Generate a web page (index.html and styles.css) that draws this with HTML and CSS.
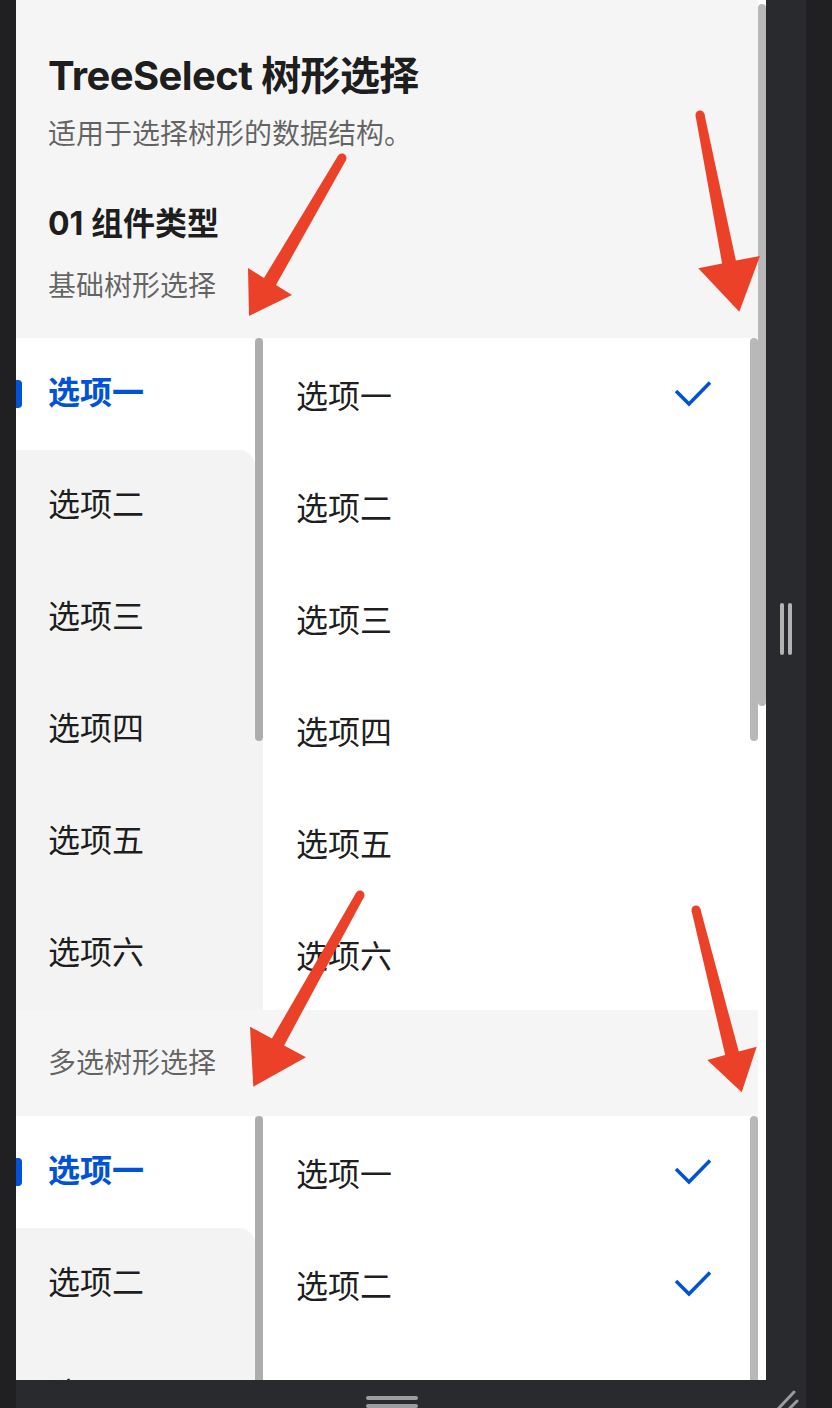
FILE: index.html
```html
<!DOCTYPE html>
<html lang="zh-CN">
<head>
    <meta charset="UTF-8">
    <meta name="viewport" content="width=device-width, initial-scale=1.0">
    <title>TreeSelect 树形选择</title>
    <link rel="stylesheet" href="styles.css">
</head>
<body>
    <div class="app">
        <div class="edge"></div>
        <div class="screen">
            <main class="page">
                <header class="demo-header">
                    <h1>TreeSelect 树形选择</h1>
                    <p class="summary">适用于选择树形的数据结构。</p>
                </header>

                <h2 class="block-title">01 组件类型</h2>
                <h3 class="block-summary first">基础树形选择</h3>

                <!-- 基础树形选择 -->
                <section class="tree-select">
                    <div class="tree-side">
                        <ul class="side-list">
                            <li class="side-item active">选项一</li>
                            <li class="side-item after-active">选项二</li>
                            <li class="side-item">选项三</li>
                            <li class="side-item">选项四</li>
                            <li class="side-item">选项五</li>
                            <li class="side-item">选项六</li>
                        </ul>
                        <div class="gutter grey"><span class="thumb dark"></span></div>
                    </div>
                    <div class="tree-main">
                        <ul class="main-list">
                            <li class="main-item">选项一
                                <svg class="check" width="36" height="26" viewBox="0 0 36 26"><polyline points="1,10 14,23 35,1.5"/></svg>
                            </li>
                            <li class="main-item">选项二</li>
                            <li class="main-item">选项三</li>
                            <li class="main-item">选项四</li>
                            <li class="main-item">选项五</li>
                            <li class="main-item">选项六</li>
                        </ul>
                        <div class="gutter"><span class="thumb"></span></div>
                    </div>
                </section>

                <h3 class="block-summary">多选树形选择</h3>

                <!-- 多选树形选择 -->
                <section class="tree-select">
                    <div class="tree-side">
                        <ul class="side-list">
                            <li class="side-item active">选项一</li>
                            <li class="side-item after-active">选项二</li>
                            <li class="side-item">选项三</li>
                            <li class="side-item">选项四</li>
                            <li class="side-item">选项五</li>
                            <li class="side-item">选项六</li>
                        </ul>
                        <div class="gutter grey"><span class="thumb dark"></span></div>
                    </div>
                    <div class="tree-main">
                        <ul class="main-list">
                            <li class="main-item">选项一
                                <svg class="check" width="36" height="26" viewBox="0 0 36 26"><polyline points="1,10 14,23 35,1.5"/></svg>
                            </li>
                            <li class="main-item">选项二
                                <svg class="check" width="36" height="26" viewBox="0 0 36 26"><polyline points="1,10 14,23 35,1.5"/></svg>
                            </li>
                            <li class="main-item">选项三</li>
                            <li class="main-item">选项四</li>
                            <li class="main-item">选项五</li>
                            <li class="main-item">选项六</li>
                        </ul>
                        <div class="gutter"><span class="thumb"></span></div>
                    </div>
                </section>
            </main>
            <div class="page-gutter"><span class="page-thumb"></span></div>
        </div>
        <div class="dock">
            <span class="grip-line"></span>
            <span class="grip-line"></span>
        </div>
        <div class="edge-right"></div>
    </div>

    <div class="bottom">
        <div class="edge"></div>
        <div class="bottom-bar">
            <div class="handle">
                <span></span>
                <span></span>
            </div>
            <svg class="resize" width="26" height="18" viewBox="0 0 26 18">
                <line x1="4" y1="19" x2="20" y2="2"/>
                <line x1="15" y1="19" x2="23" y2="11"/>
            </svg>
        </div>
        <div class="edge-right"></div>
    </div>

    <!-- red annotation arrows -->
    <svg class="marks" width="832" height="1408" viewBox="0 0 832 1408">
        <polygon points="338,155.7 264,278 248,268 249,316 292,295 276,285 345.9,160.3"/>
        <circle cx="342" cy="158" r="4.5"/>
        <polygon points="695.6,115.9 722.1,263.4 698.3,268.3 739.3,311.7 760,256 735.9,260.6 704.4,114.1"/>
        <circle cx="700" cy="115" r="4.5"/>
        <polygon points="356.1,892.8 271.9,1038.6 250,1026.7 253.3,1086.7 306,1057.3 284.1,1045.4 363.9,897.2"/>
        <circle cx="360" cy="895" r="4.5"/>
        <polygon points="691.6,911.1 725.2,1055 707.3,1060 741.7,1092.3 756.7,1046.7 738.8,1051.6 700.4,908.9"/>
        <circle cx="696" cy="910" r="4.5"/>
    </svg>
</body>
</html>
```

FILE: styles.css
```css
/* styles.css */
body {
    margin: 0;
    padding: 0;
    background-color: #202022;
    font-family: Inter, "Noto Sans CJK SC", sans-serif;
    color: rgba(0, 0, 0, 0.9);
    position: relative;
    width: 832px;
    height: 1408px;
    overflow: hidden;
}

ul {
    list-style: none;
    margin: 0;
    padding: 0;
}

.app {
    display: flex;
    height: 1380px;
}

.edge {
    width: 16px;
    flex-shrink: 0;
    background-color: #202022;
}

.edge-right {
    flex: 1;
    background-color: #202022;
}

.screen {
    width: 750px;
    display: flex;
    background-color: #fff;
    overflow: hidden;
}

.page {
    width: 742px;
    background-color: #f5f5f5;
}

.page-gutter {
    width: 8px;
    background-color: #fff;
}

.page-thumb {
    display: block;
    margin-top: 4px;
    height: 702px;
    border-radius: 4px;
    background-color: #b8b8b8;
}

.dock {
    width: 40px;
    background-color: #292a2e;
    display: flex;
    justify-content: center;
    align-items: flex-start;
    gap: 4px;
    padding-top: 603px;
    box-sizing: border-box;
}

.grip-line {
    width: 4px;
    height: 52px;
    border-radius: 2px;
    background-color: #b3b3b3;
}

/* header */
.demo-header {
    padding: 48px 32px 0;
}

.demo-header h1 {
    margin: 0;
    font-size: 40px;
    line-height: 56px;
    font-weight: 700;
    letter-spacing: -0.6px;
}

.summary {
    margin: 8px 0 0;
    font-size: 28px;
    line-height: 44px;
    color: rgba(0, 0, 0, 0.6);
}

.block-title {
    margin: 44px 0 0;
    padding: 0 32px;
    font-size: 32px;
    line-height: 48px;
    font-weight: 700;
}

.block-summary {
    margin: 0;
    padding: 31px 32px;
    font-size: 28px;
    line-height: 44px;
    font-weight: 400;
    color: rgba(0, 0, 0, 0.6);
}

.block-summary.first {
    padding: 16px 32px 30px;
}

/* tree select */
.tree-select {
    display: flex;
    height: 672px;
    background-color: #fff;
    overflow: hidden;
}

.tree-side {
    width: 247px;
    display: flex;
}

.side-list {
    width: 239px;
    background-color: #fff;
}

.side-item {
    height: 112px;
    line-height: 110px;
    padding-left: 32px;
    font-size: 32px;
    background-color: #f3f3f3;
}

.side-item.active {
    position: relative;
    background-color: #fff;
    color: #0052d9;
    font-weight: 700;
}

.side-item.active::before {
    content: "";
    position: absolute;
    left: 0;
    top: 42px;
    width: 6px;
    height: 28px;
    border-radius: 0 4px 4px 0;
    background-color: #0052d9;
}

.side-item.after-active {
    border-top-right-radius: 16px;
}

.gutter {
    width: 8px;
    background-color: #fff;
}

.gutter.grey {
    background-color: #f3f3f3;
}

.thumb {
    display: block;
    height: 403px;
    border-radius: 4px;
    background-color: #b8b8b8;
}

.thumb.dark {
    background-color: #adadad;
}

.tree-main {
    flex: 1;
    display: flex;
}

.main-list {
    width: 487px;
}

.main-item {
    height: 112px;
    padding: 0 39px 0 33px;
    display: flex;
    justify-content: space-between;
    align-items: center;
    font-size: 32px;
}

.check {
    fill: none;
    stroke: #0052d9;
    stroke-width: 3.6;
}

/* bottom bar */
.bottom {
    display: flex;
    height: 28px;
}

.bottom-bar {
    width: 790px;
    background-color: #292a2e;
    display: flex;
    align-items: flex-start;
}

.handle {
    margin: 16px 0 0 350px;
    display: flex;
    flex-direction: column;
    gap: 4px;
}

.handle span {
    display: block;
    width: 52px;
    height: 4px;
    border-radius: 2px;
    background-color: #9d9d9d;
}

.resize {
    margin: 10px 0 0 auto;
    margin-right: 6px;
    stroke: #9a9a9a;
    stroke-width: 3;
    stroke-linecap: round;
}

/* annotation arrows */
.marks {
    position: absolute;
    left: 0;
    top: 0;
    pointer-events: none;
    fill: #ea4128;
}
```
